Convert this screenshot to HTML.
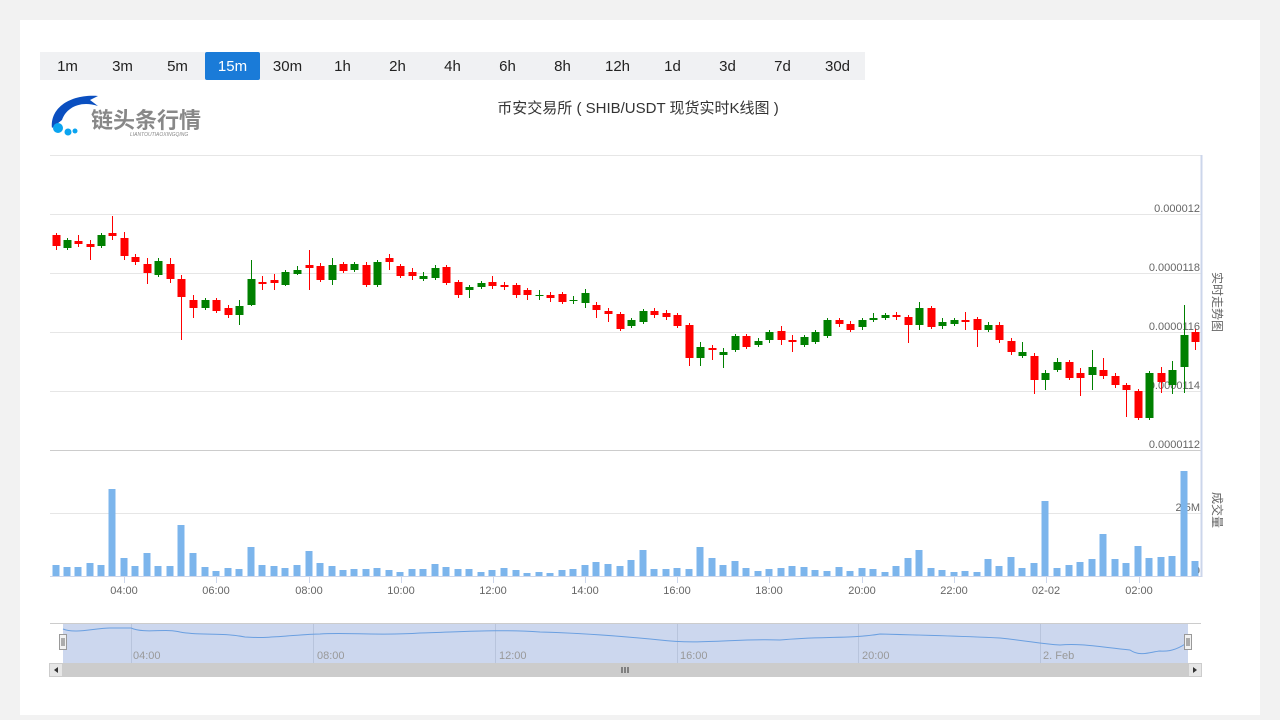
<!DOCTYPE html>
<html><head><meta charset="utf-8"><style>
*{margin:0;padding:0;box-sizing:border-box}
body{width:1280px;height:720px;background:#f2f2f2;font-family:"Liberation Sans","Noto Sans CJK SC",sans-serif;position:relative;overflow:hidden}
.card{position:absolute;left:20px;top:20px;width:1240px;height:695px;background:#fff}
.tabs{position:absolute;left:40px;top:52px;height:28px;display:flex;background:#f0f1f3}
.tabs div{width:55px;text-align:center;line-height:30px;font-size:15px;color:#222}
.tabs .on{background:#1a7bd8;color:#fff;border-radius:2px}
svg{position:absolute;left:0;top:0}
</style></head><body>
<div class="card"></div>
<div class="tabs"><div>1m</div><div>3m</div><div>5m</div><div class="on">15m</div><div>30m</div><div>1h</div><div>2h</div><div>4h</div><div>6h</div><div>8h</div><div>12h</div><div>1d</div><div>3d</div><div>7d</div><div>30d</div></div>
<svg id="s" width="1280" height="720" xmlns="http://www.w3.org/2000/svg" font-family="Liberation Sans, Noto Sans CJK SC, sans-serif">
<path d="M52 128 C50 108 70 94 98 96 L90 100 L98 106 C80 100 66 108 62 120 Z" fill="#0a4fc0"/>
<circle cx="58" cy="128" r="5" fill="#0aa4f0"/><circle cx="68" cy="132" r="3.5" fill="#0aa4f0"/><circle cx="75" cy="131" r="2.5" fill="#0aa4f0"/>
<text x="91" y="128" font-size="22" font-weight="bold" fill="#888">链头条行情</text>
<text x="130" y="136" font-size="5" fill="#888" font-style="italic">LIANTOUTIAOXINGQING</text>
<text x="638" y="113" font-size="15" fill="#333" text-anchor="middle">币安交易所 ( SHIB/USDT 现货实时K线图 )</text>
<g id="g"></g>
</svg>
<script>
var g=document.getElementById('g'),h='';
function L(x1,y1,x2,y2,c,w){h+='<line x1="'+x1+'" y1="'+y1+'" x2="'+x2+'" y2="'+y2+'" stroke="'+c+'" stroke-width="'+(w||1)+'"/>';}
function T(x,y,t,a,c,s){h+='<text x="'+x+'" y="'+y+'" font-size="'+(s||11)+'" fill="'+(c||'#666')+'" text-anchor="'+(a||'middle')+'">'+t+'</text>';}
L(50,155.5,1201,155.5,'#e6e6e6');
[214,273,332,391,450,513].forEach(function(y){L(50,y+.5,1201,y+.5,'#e6e6e6');});
L(50,450.5,1201,450.5,'#ccc');
L(1201.5,155,1201.5,577,'#ccd6eb',2);
L(50,576.5,1201,576.5,'#ccd6eb');
T(1200,212,'0.000012','end');T(1200,271,'0.0000118','end');T(1200,330,'0.0000116','end');T(1200,389,'0.0000114','end');T(1200,448,'0.0000112','end');
T(1200,511,'2.5M','end');T(1200,574,'0','end');
h+='<text x="1213" y="272" font-size="12" fill="#666" transform="rotate(90 1213 272)">实时走势图</text>';
h+='<text x="1213" y="492" font-size="12" fill="#666" transform="rotate(90 1213 492)">成交量</text>';
var tl=[[124,'04:00'],[216,'06:00'],[309,'08:00'],[401,'10:00'],[493,'12:00'],[585,'14:00'],[677,'16:00'],[769,'18:00'],[862,'20:00'],[954,'22:00'],[1046,'02-02'],[1139,'02:00']];
tl.forEach(function(t){L(t[0]+.5,577,t[0]+.5,583,'#ccd6eb');T(t[0],594,t[1]);});
var C=[[56,235,246,233,250,0],[67,240,248,238,250,1],[78,241,244,235,247,0],[90,244,247,240,260,0],[101,235,246,233,248,1],[112,233,236,216,240,0],[124,238,256,232,260,0],[135,257,262,254,265,0],[147,264,273,258,284,0],[158,261,275,258,277,1],[170,264,279,258,283,0],[181,279,297,275,340,0],[193,300,308,295,318,0],[205,300,308,298,310,1],[216,300,311,298,313,0],[228,308,315,305,318,0],[239,306,315,300,325,1],[251,279,305,260,306,1],[262,282,284,276,290,0],[274,280,283,274,290,0],[285,272,285,270,286,1],[297,270,274,266,275,1],[309,265,268,250,290,0],[320,266,280,263,282,0],[332,265,280,258,285,1],[343,264,271,262,273,0],[354,264,270,262,272,1],[366,265,285,262,287,0],[377,262,285,260,287,1],[389,258,262,254,270,0],[400,266,276,264,278,0],[412,272,276,268,280,0],[423,276,279,272,281,1],[435,268,278,265,280,1],[446,267,283,265,285,0],[458,282,295,280,298,0],[469,287,290,285,298,1],[481,283,287,281,289,1],[492,282,286,276,289,0],[504,285,287,282,290,0],[516,285,295,283,298,0],[527,290,295,288,300,0],[539,295,296,290,300,1],[550,295,298,292,302,0],[562,294,302,292,304,0],[573,300,301,296,304,1],[585,293,303,289,308,1],[596,305,310,302,318,0],[608,311,314,308,322,0],[620,314,329,312,331,0],[631,320,326,318,328,1],[643,311,322,309,324,1],[654,311,315,308,318,0],[666,313,317,310,320,0],[677,315,326,313,328,0],[689,325,358,323,366,0],[700,347,358,342,366,1],[712,348,350,345,360,0],[723,352,355,348,368,1],[735,336,350,334,352,1],[746,336,347,334,349,0],[758,341,345,338,347,1],[769,332,340,330,343,1],[781,331,340,326,345,0],[792,340,342,335,352,0],[804,337,345,335,347,1],[815,332,342,330,344,1],[827,320,336,318,338,1],[839,320,324,318,327,0],[850,324,330,321,332,0],[862,320,327,318,330,1],[873,318,320,313,322,1],[885,315,318,313,320,1],[896,315,317,312,320,0],[908,317,325,315,343,0],[919,308,325,302,330,1],[931,308,327,306,329,0],[942,322,326,318,329,1],[954,320,324,318,326,1],[965,320,322,312,330,0],[977,319,330,317,347,0],[988,325,330,322,332,1],[999,325,340,322,343,0],[1011,341,352,338,355,0],[1022,352,356,342,358,1],[1034,356,380,353,394,0],[1045,373,380,370,390,1],[1057,362,370,358,372,1],[1069,362,378,360,380,0],[1080,373,378,368,396,0],[1092,367,375,350,390,1],[1103,370,376,358,379,0],[1115,376,385,373,388,0],[1126,385,390,383,417,0],[1138,391,418,389,420,0],[1149,373,418,371,420,1],[1161,373,382,367,393,0],[1172,370,385,361,394,1],[1184,335,367,305,393,1],[1195,332,342,329,350,0]];
C.forEach(function(c){var col=c[5]?'#008000':'#ff0000';L(c[0]+.5,c[3],c[0]+.5,c[4],col);h+='<rect x="'+(c[0]-3.5)+'" y="'+c[1]+'" width="8" height="'+Math.max(1,c[2]-c[1])+'" fill="'+col+'"/>';});
var V=[11,9,9,13,11,87,18,10,23,10,10,51,23,9,5,8,7,29,11,10,8,11,25,13,10,6,7,7,8,6,4,7,7,12,9,7,7,4,6,8,6,3,4,3,6,7,11,14,12,10,16,26,7,7,8,7,29,18,11,15,8,5,7,8,10,9,6,5,9,5,8,7,4,10,18,26,8,6,4,5,4,17,10,19,8,13,75,8,11,14,17,42,17,13,30,18,19,20,105,15];
C.forEach(function(c,i){var v=V[i]||8;h+='<rect x="'+(c[0]-3.5)+'" y="'+(576-v)+'" width="7" height="'+v+'" fill="#7cb5ec"/>';});
L(50,623.5,1201,623.5,'#ccc');
h+='<rect x="63" y="624" width="1125" height="39" fill="#ccd7ee"/>';
[131,313,495,677,858,1040].forEach(function(x){L(x+.5,624,x+.5,663,'#b8c4dc');});
[[133,'04:00'],[317,'08:00'],[499,'12:00'],[680,'16:00'],[862,'20:00'],[1043,'2. Feb']].forEach(function(t){T(t[0],659,t[1],'start','#999',11);});
h+='<path d="M63 629 C75 634 95 628 110 628 L131 628 C145 634 165 628 180 632 C200 636 220 632 245 637 C270 639 300 634 320 634 C345 632 380 636 420 633 C460 632 500 629 540 632 C580 633 620 636 660 640 C700 645 740 638 780 640 C820 636 850 639 880 634 C920 635 960 636 1000 638 C1030 641 1040 644 1060 645 C1080 643 1100 647 1130 650 C1140 657 1150 652 1160 651 C1170 652 1180 648 1188 642" fill="none" stroke="#6a9fe0" stroke-width="1"/>';
h+='<rect x="59.5" y="634.5" width="7" height="15" fill="#f2f2f2" stroke="#999"/><line x1="62" y1="638" x2="62" y2="646" stroke="#666"/><line x1="64" y1="638" x2="64" y2="646" stroke="#666"/>';
h+='<rect x="1184.5" y="634.5" width="7" height="15" fill="#f2f2f2" stroke="#999"/><line x1="1187" y1="638" x2="1187" y2="646" stroke="#666"/><line x1="1189" y1="638" x2="1189" y2="646" stroke="#666"/>';
h+='<rect x="49" y="663" width="1153" height="14" fill="#f2f2f2"/><rect x="63" y="663" width="1125" height="14" fill="#cccccc"/>';
h+='<rect x="49.5" y="663.5" width="13" height="13" fill="#e6e6e6" stroke="#ccc"/><path d="M58 667 L54 670 L58 673Z" fill="#333"/>';
h+='<rect x="1188.5" y="663.5" width="13" height="13" fill="#e6e6e6" stroke="#ccc"/><path d="M1193 667 L1197 670 L1193 673Z" fill="#333"/>';
h+='<path d="M622 667v6M625 667v6M628 667v6" stroke="#333"/>';
g.innerHTML=h;
</script>
</body></html>
